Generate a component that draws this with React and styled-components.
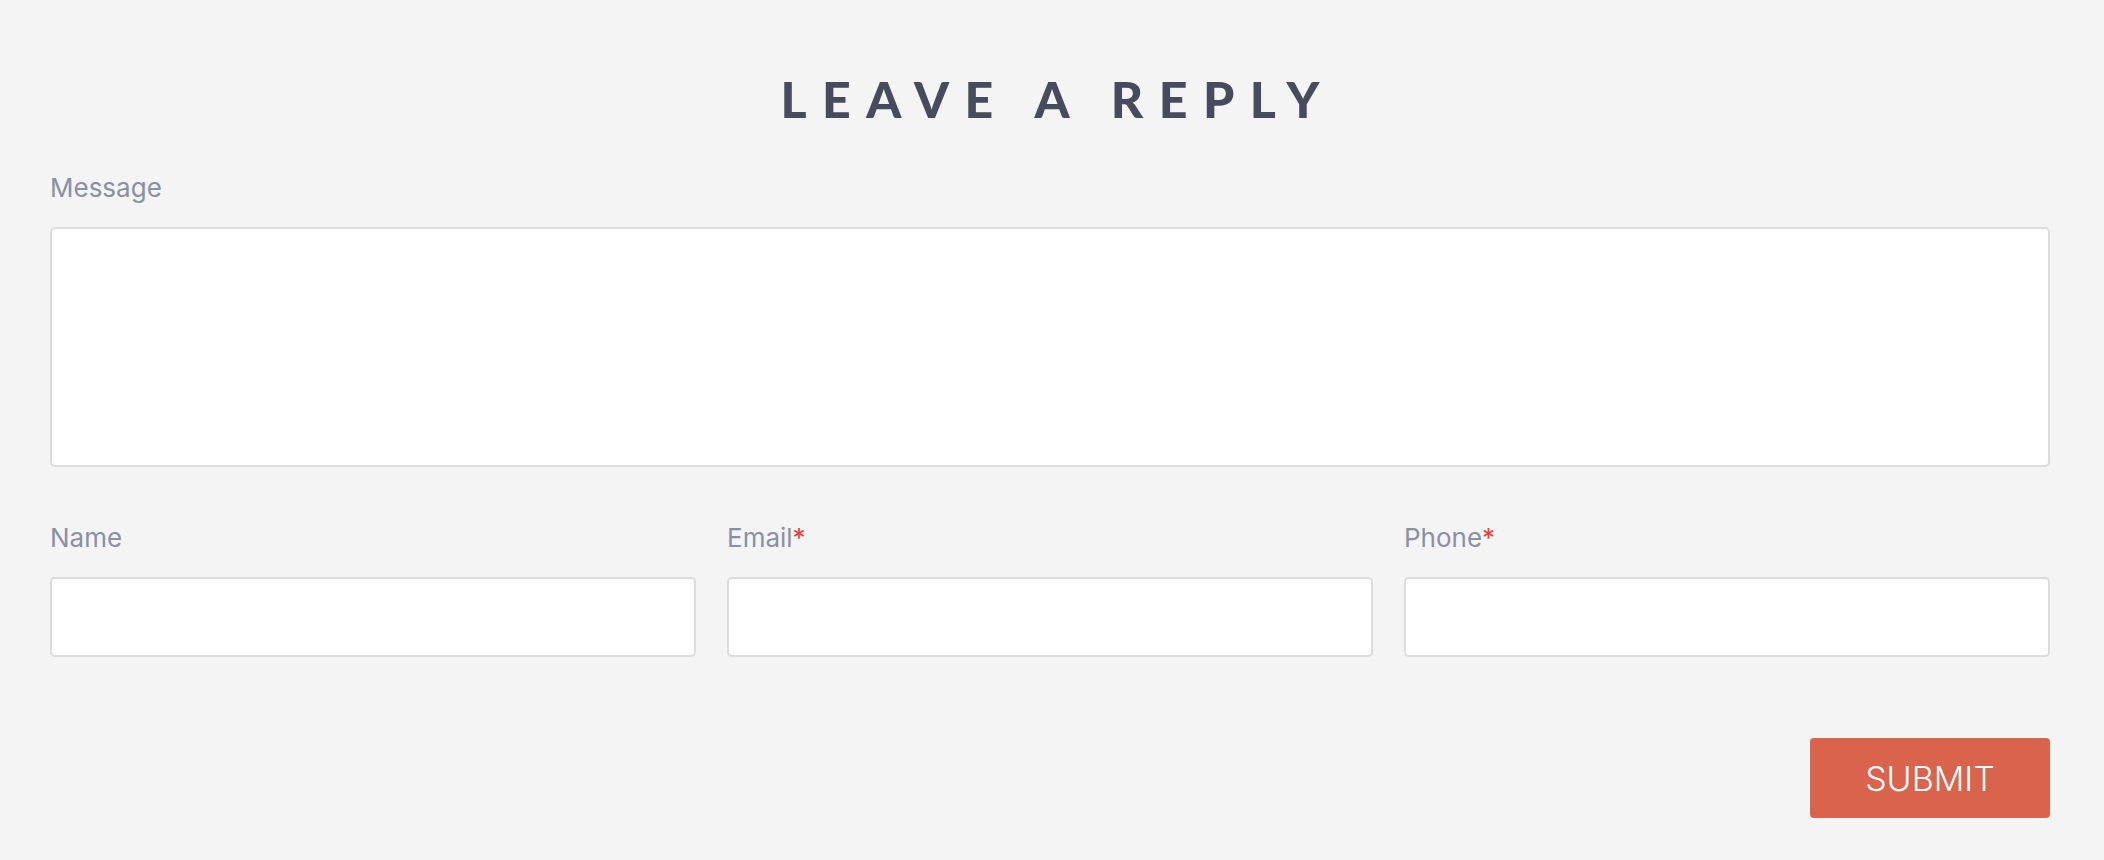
import React from 'react';
import styled, { createGlobalStyle } from 'styled-components';

const GlobalStyle = createGlobalStyle`
  html, body {
    margin: 0;
    padding: 0;
    background: #f4f4f4;
  }
  * {
    box-sizing: border-box;
  }
`;

const Page = styled.div`
  width: 2104px;
  min-height: 860px;
  background: #f4f4f4;
  padding: 72px 54px 40px 50px;
  font-family: Inter, 'Noto Sans', sans-serif;
`;

const Title = styled.h2`
  margin: 0 0 46px;
  text-align: center;
  font-family: Lato, 'Noto Sans', sans-serif;
  font-weight: 900;
  font-size: 50px;
  line-height: 54px;
  letter-spacing: 0.31em;
  padding-left: 0.31em;
  color: #484a5e;
`;

const Field = styled.div`
  display: flex;
  flex-direction: column;
`;

const Label = styled.label`
  font-size: 26px;
  line-height: 32px;
  color: #8a90a3;
  margin-bottom: 23px;
`;

const Star = styled.span`
  color: #e8413c;
`;

const TextArea = styled.textarea`
  display: block;
  width: 100%;
  height: 240px;
  border: 2px solid #dcdcdc;
  border-radius: 5px;
  background: #fff;
  resize: none;
  outline: none;
`;

const Row = styled.div`
  display: grid;
  grid-template-columns: repeat(3, 1fr);
  gap: 31px;
  margin-top: 55px;
`;

const Input = styled.input`
  display: block;
  width: 100%;
  height: 80px;
  border: 2px solid #dcdcdc;
  border-radius: 5px;
  background: #fff;
  outline: none;
`;

const Actions = styled.div`
  display: flex;
  justify-content: flex-end;
  margin-top: 81px;
`;

const SubmitButton = styled.button`
  width: 240px;
  height: 80px;
  border: none;
  border-radius: 4px;
  background: #d9634c;
  color: #fff;
  font-family: Inter, 'Noto Sans', sans-serif;
  font-weight: 300;
  font-size: 34px;
  cursor: pointer;
`;

export default function App() {
  return (
    <>
      <GlobalStyle />
      <Page>
        <Title>LEAVE A REPLY</Title>
        <Field>
          <Label>Message</Label>
          <TextArea />
        </Field>
        <Row>
          <Field>
            <Label>Name</Label>
            <Input type="text" />
          </Field>
          <Field>
            <Label>Email<Star>*</Star></Label>
            <Input type="email" />
          </Field>
          <Field>
            <Label>Phone<Star>*</Star></Label>
            <Input type="tel" />
          </Field>
        </Row>
        <Actions>
          <SubmitButton>SUBMIT</SubmitButton>
        </Actions>
      </Page>
    </>
  );
}
